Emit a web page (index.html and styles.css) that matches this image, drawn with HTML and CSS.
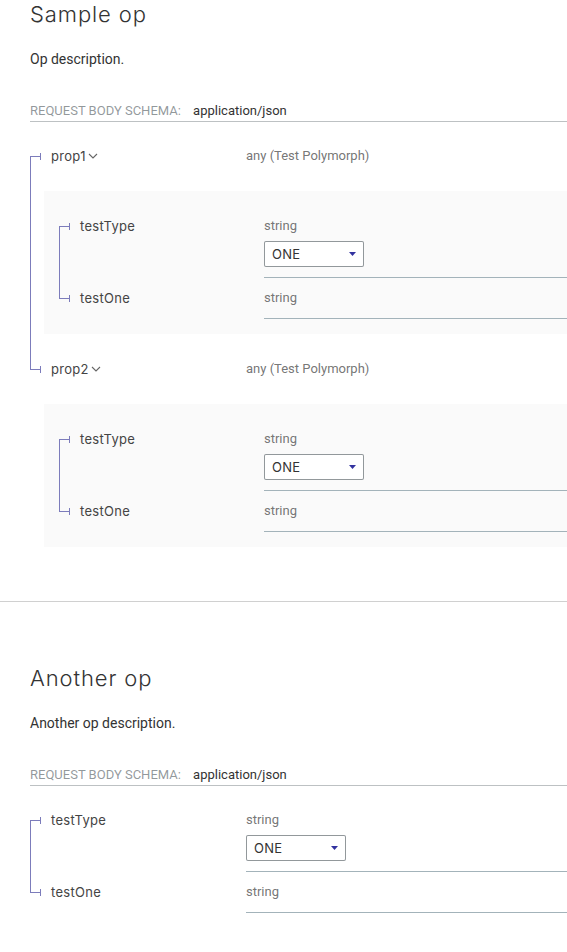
FILE: index.html
```html
<!DOCTYPE html>
<html>
<head>
    <title>Operations</title>
    <link rel="stylesheet" href="styles.css">
</head>
<body>

    <!-- Operacion 1 -->
    <div class="section first-section">
        <h2>Sample op</h2>
        <p class="desc">Op description.</p>
        <h5 class="body-header">Request Body schema: <span class="mime">application/json</span></h5>

        <div class="props">
            <div class="prop first expanded">
                <div class="prop-name">
                    <div class="name-line">
                        <span class="bullet"></span>prop1
                        <svg class="chevron" width="10" height="6" viewBox="0 0 10 6"><polyline points="1,1 5,5 9,1" fill="none" stroke="#666" stroke-width="1.1"/></svg>
                    </div>
                </div>
                <div class="prop-details"><span class="type">any (Test Polymorph)</span></div>
            </div>
            <div class="prop-inner">
                <div class="panel">
                    <div class="props nested">
                        <div class="prop first">
                            <div class="prop-name"><div class="name-line"><span class="bullet"></span>testType</div></div>
                            <div class="prop-details">
                                <span class="type">string</span>
                                <div class="select">ONE <svg width="7" height="4" viewBox="0 0 7 4"><polygon points="0,0 7,0 3.5,4" fill="#32329f"/></svg></div>
                            </div>
                        </div>
                        <div class="prop last">
                            <div class="prop-name"><div class="name-line"><span class="bullet"></span>testOne</div></div>
                            <div class="prop-details"><span class="type">string</span></div>
                        </div>
                    </div>
                </div>
            </div>

            <div class="prop last expanded">
                <div class="prop-name">
                    <div class="name-line">
                        <span class="bullet"></span>prop2
                        <svg class="chevron" width="10" height="6" viewBox="0 0 10 6"><polyline points="1,1 5,5 9,1" fill="none" stroke="#666" stroke-width="1.1"/></svg>
                    </div>
                </div>
                <div class="prop-details"><span class="type">any (Test Polymorph)</span></div>
            </div>
            <div class="prop-inner no-line">
                <div class="panel">
                    <div class="props nested">
                        <div class="prop first">
                            <div class="prop-name"><div class="name-line"><span class="bullet"></span>testType</div></div>
                            <div class="prop-details">
                                <span class="type">string</span>
                                <div class="select">ONE <svg width="7" height="4" viewBox="0 0 7 4"><polygon points="0,0 7,0 3.5,4" fill="#32329f"/></svg></div>
                            </div>
                        </div>
                        <div class="prop last">
                            <div class="prop-name"><div class="name-line"><span class="bullet"></span>testOne</div></div>
                            <div class="prop-details"><span class="type">string</span></div>
                        </div>
                    </div>
                </div>
            </div>
        </div>
    </div>

    <!-- Operacion 2 -->
    <div class="section">
        <h2>Another op</h2>
        <p class="desc">Another op description.</p>
        <h5 class="body-header">Request Body schema: <span class="mime">application/json</span></h5>

        <div class="props">
            <div class="prop first">
                <div class="prop-name"><div class="name-line"><span class="bullet"></span>testType</div></div>
                <div class="prop-details">
                    <span class="type">string</span>
                    <div class="select">ONE <svg width="7" height="4" viewBox="0 0 7 4"><polygon points="0,0 7,0 3.5,4" fill="#32329f"/></svg></div>
                </div>
            </div>
            <div class="prop last">
                <div class="prop-name"><div class="name-line"><span class="bullet"></span>testOne</div></div>
                <div class="prop-details"><span class="type">string</span></div>
            </div>
        </div>
    </div>

</body>
</html>
```

FILE: styles.css
```css
body {
    margin: 0;
    font-family: Roboto, "Liberation Sans", sans-serif;
    font-size: 14px;
    color: #333;
    background-color: white;
}

.section {
    padding: 0 0 20px 30px;
}

.first-section {
    padding-bottom: 39px;
    border-bottom: 1px solid #d0d0d0;
}

.section + .section {
    padding-top: 62px;
}

h2 {
    font-family: Inter, "DejaVu Sans", sans-serif;
    font-weight: 300;
    font-size: 22px;
    line-height: 26px;
    letter-spacing: 0.9px;
    color: #333;
    margin: 1px 0 0;
}

.desc {
    margin: 22px 0 0;
    line-height: 21px;
}

.body-header {
    margin: 31px 0 0;
    font-size: 13px;
    font-weight: normal;
    line-height: 20px;
    text-transform: uppercase;
    color: rgba(38, 50, 56, 0.5);
    border-bottom: 1px solid rgba(38, 50, 56, 0.3);
}

.mime {
    margin-left: 9px;
    text-transform: none;
    color: #333;
}

.props {
    margin-top: 14px;
}

.props.nested {
    margin-top: 0;
}

.prop {
    display: flex;
}

.prop-name {
    width: 216px;
    flex-shrink: 0;
    box-sizing: border-box;
    padding: 10px 10px 10px 0;
    font-family: Inter, "DejaVu Sans", sans-serif;
    font-size: 13px;
    letter-spacing: 0.3px;
    color: #444;
    background: linear-gradient(#7c7cbb, #7c7cbb) no-repeat 0 0 / 1px 100%;
}

.nested .prop-name {
    width: 205px;
}

.prop.first .prop-name {
    background-position: 0 20px;
}

.prop.last .prop-name {
    background-size: 1px 21px;
}

.name-line {
    display: flex;
    align-items: center;
    height: 20px;
    white-space: nowrap;
}

.bullet {
    display: flex;
    align-items: center;
    margin-right: 10px;
}

.bullet::before {
    content: '';
    width: 10px;
    height: 1px;
    background: #7c7cbb;
}

.bullet::after {
    content: '';
    width: 1px;
    height: 7px;
    background: #7c7cbb;
}

.chevron {
    margin-left: 2px;
}

.prop-details {
    flex: 1;
    padding: 10px 0;
    border-bottom: 1px solid #a3b3ba;
}

.prop.expanded .prop-details {
    border-bottom: none;
}

.type {
    display: block;
    font-size: 13px;
    line-height: 20px;
    color: rgba(102, 102, 102, 0.9);
}

.select {
    display: flex;
    align-items: center;
    justify-content: space-between;
    box-sizing: border-box;
    width: 100px;
    height: 26px;
    margin-top: 5px;
    padding: 0 7px 0 7px;
    background: white;
    border: 1px solid rgba(38, 50, 56, 0.5);
    border-radius: 2px;
    font-family: Inter, "DejaVu Sans", sans-serif;
    font-size: 13px;
    letter-spacing: 0.3px;
    color: #333;
}

.prop-inner {
    padding: 15px 0 15px 14px;
    background: linear-gradient(#7c7cbb, #7c7cbb) no-repeat 0 0 / 1px 100%;
}

.prop-inner.no-line {
    background: none;
}

.panel {
    background-color: #fafafa;
    padding: 15px 0 15px 15px;
}
```
